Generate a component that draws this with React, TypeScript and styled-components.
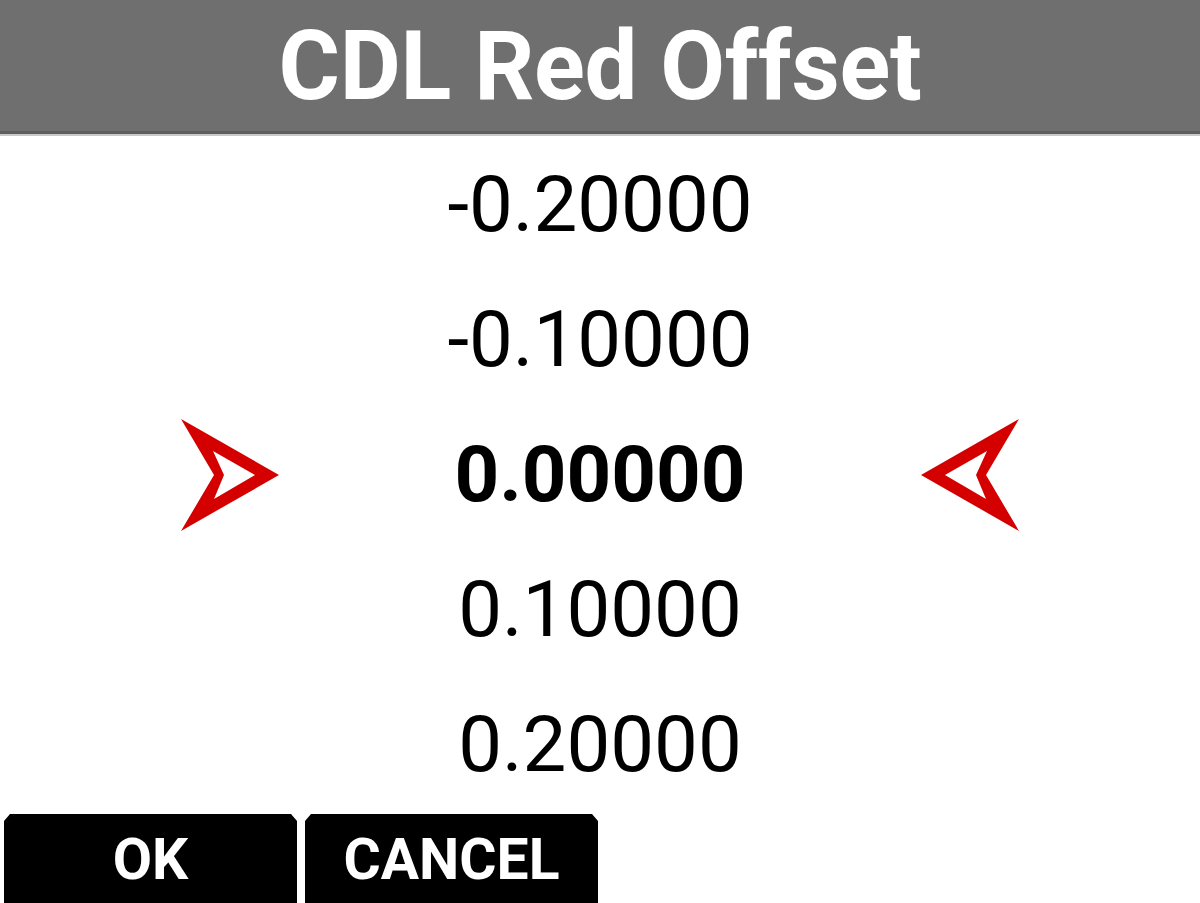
import React, { useState } from 'react';
import styled, { createGlobalStyle } from 'styled-components';

const GlobalStyle = createGlobalStyle`
  html, body {
    margin: 0;
    padding: 0;
    background: #ffffff;
    overflow: hidden;
  }
  body {
    font-family: Roboto, "Liberation Sans", Arial, sans-serif;
  }
`;

const Screen = styled.div`
  width: 1200px;
  height: 903px;
  display: flex;
  flex-direction: column;
  background: #ffffff;
  overflow: hidden;
`;

const Header = styled.div`
  height: 131px;
  background: #6f6f6f;
  border-bottom: 3px solid #5d5d5d;
  box-shadow: 0 2px 0 #c8c8c8;
  display: flex;
  align-items: center;
  justify-content: center;
  flex-shrink: 0;
`;

const Title = styled.h1`
  margin: 0;
  color: #ffffff;
  font-family: Roboto, "Liberation Sans", sans-serif;
  font-weight: 700;
  font-size: 94px;
  line-height: 1;
  letter-spacing: -0.3px;
  transform: scaleY(1.03);
`;

const List = styled.div`
  display: flex;
  flex-direction: column;
  padding-top: 3px;
`;

const Row = styled.div`
  height: 135px;
  display: flex;
  align-items: center;
  justify-content: center;
`;

const ArrowSlot = styled.div`
  width: 100px;
  height: 112px;
  display: flex;
  align-items: center;
  justify-content: center;
`;

const Value = styled.div<{ $selected?: boolean }>`
  width: 642px;
  text-align: center;
  color: #000000;
  font-family: Roboto, "Liberation Sans", sans-serif;
  font-size: 78px;
  font-weight: ${({ $selected }) => ($selected ? 700 : 400)};
  line-height: 1;
`;

const ButtonBar = styled.div`
  display: flex;
  gap: 8px;
  padding: 2px 0 0 4px;
`;

const SoftButton = styled.button`
  width: 293px;
  height: 100px;
  border: none;
  background: #000000;
  color: #ffffff;
  font-family: Roboto, "Liberation Sans", sans-serif;
  font-weight: 700;
  font-size: 57px;
  line-height: 1;
  display: flex;
  justify-content: center;
  align-items: flex-start;
  padding: 17px 0 0;
  clip-path: polygon(6px 0, calc(100% - 6px) 0, 100% 7px, 100% 100%, 0 100%, 0 7px);
  cursor: pointer;
`;

const Arrow = ({ flip }: { flip?: boolean }) => (
  <svg
    width="100"
    height="112"
    viewBox="0 0 100 112"
    style={flip ? { transform: 'scaleX(-1)' } : undefined}
  >
    <path
      fill="#d40000"
      fillRule="evenodd"
      d="M2 0 L100 56 L2 112 L35 56 Z M34 32 L45 56 L35 80 L76 56 Z"
    />
  </svg>
);

const values = ['-0.20000', '-0.10000', '0.00000', '0.10000', '0.20000'];

const App = () => {
  const [selected] = useState(2);

  return (
    <Screen>
      <GlobalStyle />
      <Header>
        <Title>CDL Red Offset</Title>
      </Header>
      <List>
        {values.map((v, i) => (
          <Row key={v}>
            <ArrowSlot>{i === selected && <Arrow />}</ArrowSlot>
            <Value $selected={i === selected}>{v}</Value>
            <ArrowSlot>{i === selected && <Arrow flip />}</ArrowSlot>
          </Row>
        ))}
      </List>
      <ButtonBar>
        <SoftButton>OK</SoftButton>
        <SoftButton>CANCEL</SoftButton>
      </ButtonBar>
    </Screen>
  );
};

export default App;
